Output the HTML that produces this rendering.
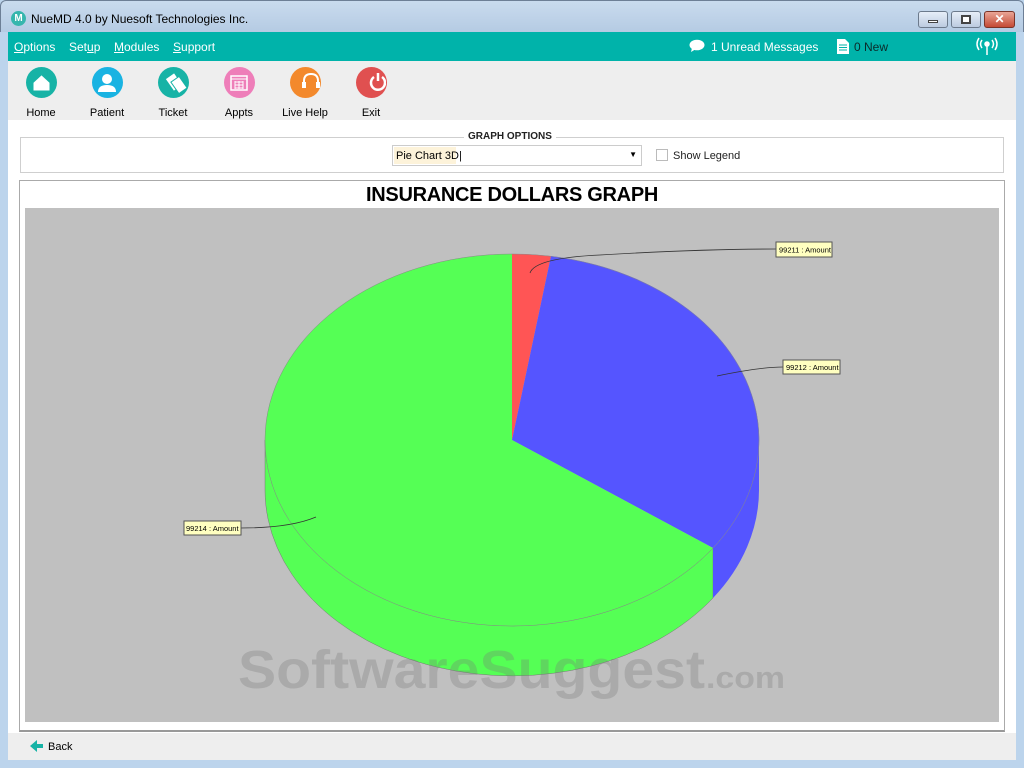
<!DOCTYPE html>
<html><head><meta charset="utf-8"><style>
*{margin:0;padding:0;box-sizing:border-box}
body{width:1024px;height:768px;overflow:hidden;background:#bcd4ec;font-family:"Liberation Sans",sans-serif;position:relative}
.title{position:absolute;left:0;top:0;width:1024px;height:32px;background:linear-gradient(#c9dbee,#b5cbe3);border:1px solid #6d7f96;border-bottom:none;border-radius:6px 6px 0 0}
.title span{position:absolute;left:30px;top:11px;font-size:12px;color:#000}
.logo{position:absolute;left:10px;top:10px;width:15px;height:15px;border-radius:50%;background:#36b6ad;color:#fff;font-size:10px;font-weight:bold;text-align:center;line-height:15px}
.wb{position:absolute;top:10px;height:17px;border:1px solid #6c7a8c;border-radius:3px;background:linear-gradient(#e6eef8,#bccbe0)}
.menu{position:absolute;left:8px;top:32px;width:1008px;height:29px;background:#00b3aa;color:#fff;font-size:12px}
.menu a{position:absolute;top:8px;color:#fff;text-decoration:none}
.tool{position:absolute;left:8px;top:61px;width:1008px;height:59px;background:#eeeeee}
.btn{position:absolute;top:6px;width:60px;text-align:center;font-size:11px;color:#000}
.btn i{display:block;width:31px;height:31px;border-radius:50%;margin:0 auto 9px}
.main{position:absolute;left:8px;top:120px;width:1008px;height:613px;background:#fff}
.foot{position:absolute;left:8px;top:733px;width:1008px;height:27px;background:#eeeeee}
</style></head><body>
<div class="title"><div class="logo">M</div><span>NueMD 4.0 by Nuesoft Technologies Inc.</span>
<div class="wb" style="left:917px;width:30px"><div style="position:absolute;left:9px;top:8px;width:10px;height:3px;background:#fff;border:1px solid #444"></div></div>
<div class="wb" style="left:950px;width:30px"><div style="position:absolute;left:9px;top:3px;width:10px;height:9px;border:2px solid #444;background:#fff"></div></div>
<div class="wb" style="left:983px;width:31px;background:linear-gradient(#e9a596,#c44a35);border-color:#7a3428;color:#fff;font-weight:bold;text-align:center;font-size:12px;line-height:15px">✕</div>
</div>
<div class="menu">
<a style="left:6px"><u>O</u>ptions</a><a style="left:61px">Set<u>u</u>p</a><a style="left:106px"><u>M</u>odules</a><a style="left:165px"><u>S</u>upport</a>
<svg style="position:absolute;left:681px;top:7px" width="16" height="14"><ellipse cx="8" cy="6" rx="7.5" ry="5.3" fill="#fff"/><path d="M3 9 L2 13 L7 10Z" fill="#fff"/></svg>
<a style="left:703px">1 Unread Messages</a>
<svg style="position:absolute;left:829px;top:7px" width="12" height="15"><path d="M0 0H8L12 4V15H0Z" fill="#fff"/><path d="M2 6H10M2 8.5H10M2 11H10" stroke="#00b3aa"/></svg>
<a style="left:846px;color:#0b2a2a">0 New</a>
<svg style="position:absolute;left:966px;top:5px" width="26" height="18" fill="none" stroke="#fff" stroke-width="1.5"><circle cx="13" cy="7" r="2" fill="#fff"/><path d="M13 9V18"/><path d="M8 3Q5 7 8 11M18 3Q21 7 18 11M5 1Q1 7 5 13M21 1Q25 7 21 13"/></svg>
</div>
<div class="tool">
<div class="btn" style="left:3px"><i style="background:#17b3a6"></i>Home</div>
<div class="btn" style="left:69px"><i style="background:#19b3e2"></i>Patient</div>
<div class="btn" style="left:135px"><i style="background:#17b3a6"></i>Ticket</div>
<div class="btn" style="left:201px"><i style="background:#ee7eb9"></i>Appts</div>
<div class="btn" style="left:267px"><i style="background:#f3892c"></i>Live Help</div>
<div class="btn" style="left:333px"><i style="background:#e05050"></i>Exit</div>
<svg style="position:absolute;left:18px;top:6px" width="360" height="31">
<path d="M8 16L15.5 9L23 16V23H8Z M13 23V18H18V23" fill="#fff" stroke="#fff"/>
<circle cx="81" cy="12" r="5" fill="#fff"/><path d="M72 25Q72 18 81 18Q90 18 90 25Z" fill="#fff"/>
<rect x="143" y="8" width="10" height="14" transform="rotate(-35 148 15)" fill="#fff"/><rect x="148" y="11" width="10" height="14" transform="rotate(-35 153 18)" fill="#fff" stroke="#17b3a6"/>
<rect x="205" y="9" width="16" height="14" fill="none" stroke="#fff" stroke-width="1.5"/><path d="M205 12H221M209 15H217M209 18H217M209 21H217M209 14V22M213 14V22M217 14V22" stroke="#fff"/>
<path d="M278 18V14Q278 7 285 7Q292 7 292 14V18" fill="none" stroke="#fff" stroke-width="2"/><rect x="276" y="15" width="4" height="6" fill="#fff"/><rect x="290" y="15" width="4" height="6" fill="#fff"/>
<path d="M348 10A7 7 0 1 0 356 10" fill="none" stroke="#fff" stroke-width="2.5"/><path d="M352 6V14" stroke="#fff" stroke-width="2.5"/>
</svg>
</div>
<div class="main">
<div style="position:absolute;left:12px;top:17px;width:984px;height:36px;border:1px solid #cfcfcf"></div>
<div style="position:absolute;left:456px;top:11px;background:#fff;padding:0 4px;font-size:10px;font-weight:bold;color:#222">GRAPH OPTIONS</div>
<div style="position:absolute;left:384px;top:25px;width:250px;height:21px;border:1px solid #ccc;background:#fff"><div style="position:absolute;left:1px;top:1px;width:62px;height:17px;background:#fdf3da"></div><span style="position:absolute;left:3px;top:4px;font-size:11px">Pie Chart 3D|</span><span style="position:absolute;right:4px;top:4px;font-size:8px">▼</span></div>
<div style="position:absolute;left:648px;top:29px;width:12px;height:12px;border:1px solid #bbb"></div>
<span style="position:absolute;left:665px;top:30px;font-size:11px;color:#222">Show Legend</span>
<div style="position:absolute;left:11px;top:60px;width:986px;height:552px;border:1px solid #aaa;border-bottom:2px solid #999"></div>
<div style="position:absolute;left:0;top:64px;width:1008px;text-align:center;font-size:20px;font-weight:bold;letter-spacing:-0.3px">INSURANCE DOLLARS GRAPH</div>
<div style="position:absolute;left:17px;top:88px;width:974px;height:514px;background:#c0c0c0"></div>
</div>
<svg style="position:absolute;left:0;top:0" width="1024" height="768">
<path d="M713,548 A247,186 0 0 1 265,440 L265,490 A247,186 0 0 0 713,598 Z" fill="#55ff55" stroke="#777" stroke-width="0.5"/>
<path d="M759,440 A247,186 0 0 1 713,548 L713,598 A247,186 0 0 0 759,490 Z" fill="#5555ff"/>
<path d="M512,440 L512,254 A247,186 0 0 1 551,256 Z" fill="#ff5555"/>
<path d="M512,440 L551,256 A247,186 0 0 1 713,548 Z" fill="#5555ff"/>
<path d="M512,440 L713,548 A247,186 0 1 1 512,254 Z" fill="#55ff55"/>
<ellipse cx="512" cy="440" rx="247" ry="186" fill="none" stroke="#888" stroke-width="0.5"/>
<text x="238" y="688" font-family="Liberation Sans" font-weight="bold" font-size="54" fill="rgba(120,120,120,0.3)" textLength="467" lengthAdjust="spacingAndGlyphs">SoftwareSuggest</text><text x="706" y="688" font-family="Liberation Sans" font-weight="bold" font-size="31" fill="rgba(120,120,120,0.3)" textLength="79" lengthAdjust="spacingAndGlyphs">.com</text>
<g fill="none" stroke="#333" stroke-width="0.8"><path d="M530,273 Q535,258 600,255 Q700,249 776,249"/><path d="M717,376 Q760,367 783,367"/><path d="M316,517 Q290,528 241,528"/></g>
<g font-family="Liberation Sans" font-size="7.5" fill="#000"><rect x="776" y="242" width="56" height="15" fill="#ffffc0" stroke="#555"/><text x="779" y="252.5">99211 : Amount</text>
<rect x="783" y="360" width="57" height="14" fill="#ffffc0" stroke="#555"/><text x="786" y="370">99212 : Amount</text>
<rect x="184" y="521" width="57" height="14" fill="#ffffc0" stroke="#555"/><text x="186" y="531">99214 : Amount</text></g>
</svg>
<div class="foot"><svg style="position:absolute;left:22px;top:7px" width="14" height="12"><path d="M0 6L7 0V4H13V8H7V12Z" fill="#17b3a6"/></svg><span style="position:absolute;left:40px;top:8px;font-size:11px">Back</span></div>
</body></html>
